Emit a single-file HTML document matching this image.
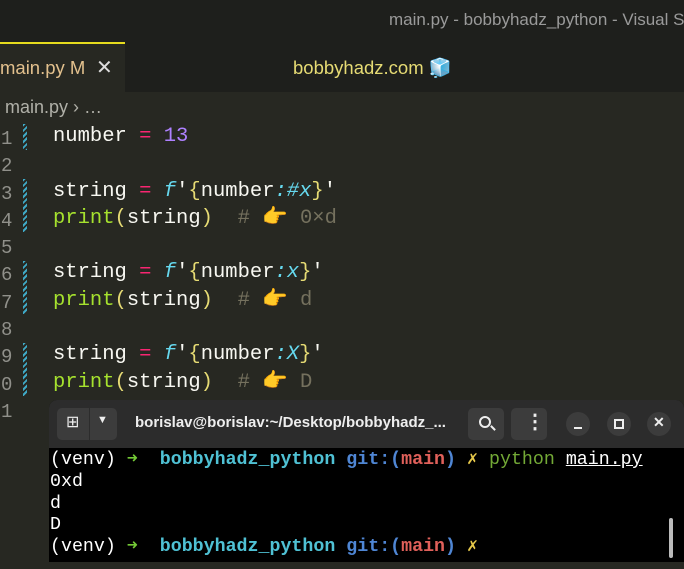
<!DOCTYPE html><html><head><style>
body{margin:0;width:684px;height:569px;overflow:hidden;background:#272822;font-family:"Liberation Sans",sans-serif;position:relative}
.t{position:absolute;white-space:pre}
.code{font-family:"Liberation Mono",monospace;font-size:20.5px;color:#f8f8f2}
.ln{font-family:"Liberation Mono",monospace;font-size:19px;color:#90908a}
.term{font-family:"Liberation Mono",monospace;font-size:18.3px;color:#fff}
.bar{position:absolute;left:23px;width:4px;background:repeating-linear-gradient(135deg,#3fa9c6 0 2px,#272822 2px 4px)}
</style></head><body>
<div style="position:absolute;left:0;top:0;width:684px;height:43px;background:#1e1f1c"></div>
<div class="t" style="left:389px;top:10px;font-size:17px;color:#9a9a9a;width:295px;overflow:hidden">main.py - bobbyhadz_python - Visual Studio Code</div>
<div style="position:absolute;left:0;top:43px;width:684px;height:49px;background:#1e1f1c"></div>
<div style="position:absolute;left:0;top:42px;width:125px;height:50px;background:#272822;border-top:2px solid #e6db1e;box-sizing:border-box"></div>
<div class="t" style="left:0;top:57px;font-size:18.5px;color:#e2c08d">main.py M</div>
<div class="t" style="left:96px;top:55px;font-size:20px;color:#ddd">✕</div>
<div class="t" style="left:293px;top:57px;font-size:18.5px;color:#e6db74">bobbyhadz.com <span style="color:#7fc6ee">🧊</span></div>
<div class="t" style="left:5px;top:97px;font-size:18px;color:#b0b0a8">main.py › …</div>
<div class="bar" style="top:124px;height:26px"></div>
<div class="bar" style="top:179px;height:53px"></div>
<div class="bar" style="top:261px;height:53px"></div>
<div class="bar" style="top:343px;height:53px"></div>
<div class="ln t" style="left:1px;top:126px;line-height:27.3px">1
2
3
4
5
6
7
8
9
0
1</div>
<div class="code t" style="left:53px;top:123px;line-height:27.3px">number <span style="color:#f92672">=</span> <span style="color:#ae81ff">13</span>

string <span style="color:#f92672">=</span> <i style="color:#66d9ef">f</i>'<span style="color:#e6db74">{</span>number<i style="color:#66d9ef">:#x</i><span style="color:#e6db74">}</span>'
<span style="color:#a6e22e">print</span><span style="color:#e6db74">(</span>string<span style="color:#e6db74">)</span>  <span style="color:#75715e"># <span style="color:#f5b301">👉</span> 0×d</span>

string <span style="color:#f92672">=</span> <i style="color:#66d9ef">f</i>'<span style="color:#e6db74">{</span>number<i style="color:#66d9ef">:x</i><span style="color:#e6db74">}</span>'
<span style="color:#a6e22e">print</span><span style="color:#e6db74">(</span>string<span style="color:#e6db74">)</span>  <span style="color:#75715e"># <span style="color:#f5b301">👉</span> d</span>

string <span style="color:#f92672">=</span> <i style="color:#66d9ef">f</i>'<span style="color:#e6db74">{</span>number<i style="color:#66d9ef">:X</i><span style="color:#e6db74">}</span>'
<span style="color:#a6e22e">print</span><span style="color:#e6db74">(</span>string<span style="color:#e6db74">)</span>  <span style="color:#75715e"># <span style="color:#f5b301">👉</span> D</span></div>
<div style="position:absolute;left:49px;top:400px;width:635px;height:162px;background:#000;border-radius:8px 8px 0 0;overflow:hidden">
<div style="position:absolute;left:0;top:0;width:635px;height:48px;background:#2c2c2c"></div>
<div style="position:absolute;left:8px;top:8px;width:60px;height:32px;background:#3c3c3c;border-radius:5px"></div>
<div style="position:absolute;left:40px;top:8px;width:1px;height:32px;background:#2c2c2c"></div>
<div class="t" style="left:17px;top:12px;color:#eee;font-size:16px">⊞</div>
<div class="t" style="left:48px;top:14px;color:#eee;font-size:11px">▼</div>
<div class="t" style="left:86px;top:14px;color:#eee;font-size:15px;font-weight:bold">borislav@borislav:~/Desktop/bobbyhadz_...</div>
<div style="position:absolute;left:419px;top:8px;width:36px;height:32px;background:#3c3c3c;border-radius:5px"></div>
<div style="position:absolute;left:430px;top:16px;width:8px;height:8px;border:2px solid #eee;border-radius:50%"></div>
<div style="position:absolute;left:441px;top:27px;width:6px;height:2px;background:#eee;transform:rotate(45deg)"></div>
<div style="position:absolute;left:462px;top:8px;width:36px;height:32px;background:#3c3c3c;border-radius:5px"></div>
<div class="t" style="left:476px;top:9px;color:#eee;font-size:20px;font-weight:bold">⋮</div>
<div style="position:absolute;left:517px;top:12px;width:24px;height:24px;background:#3c3c3c;border-radius:50%"></div>
<div style="position:absolute;left:525px;top:27px;width:8px;height:2px;background:#eee"></div>
<div style="position:absolute;left:558px;top:12px;width:24px;height:24px;background:#3c3c3c;border-radius:50%"></div>
<div style="position:absolute;left:565px;top:19px;width:6px;height:6px;border:2px solid #eee"></div>
<div style="position:absolute;left:598px;top:12px;width:24px;height:24px;background:#3c3c3c;border-radius:50%"></div>
<div class="t" style="left:604px;top:14px;color:#eee;font-size:14px;font-weight:bold">✕</div>
<div style="position:absolute;left:620px;top:118px;width:4px;height:40px;background:#bbb;border-radius:2px"></div>
</div>
<div class="term t" style="left:50px;top:450px;line-height:21.8px">(venv) <b style="color:#73c936">➜</b>  <b style="color:#4fc1d4">bobbyhadz_python</b> <b style="color:#4f86d4">git:(<span style="color:#e0605a">main</span>)</b> <b style="color:#e6c84a">✗</b> <span style="color:#73a936">python</span> <u>main.py</u>
0xd
d
D
(venv) <b style="color:#73c936">➜</b>  <b style="color:#4fc1d4">bobbyhadz_python</b> <b style="color:#4f86d4">git:(<span style="color:#e0605a">main</span>)</b> <b style="color:#e6c84a">✗</b></div>
</body></html>
